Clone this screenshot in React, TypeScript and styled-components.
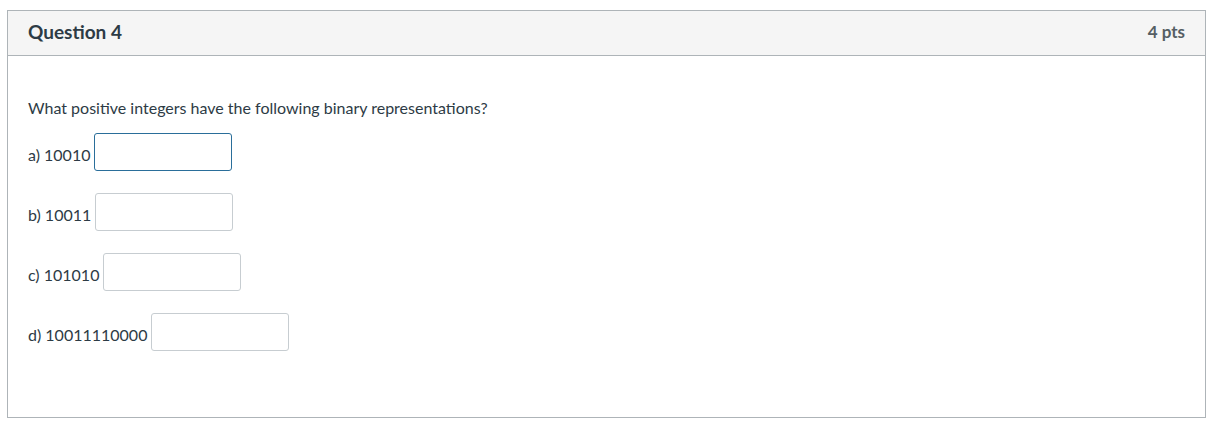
import styled, { createGlobalStyle } from "styled-components";

const Global = createGlobalStyle`
  body {
    margin: 0;
    background: #ffffff;
    font-family: Lato, "Open Sans", sans-serif;
    color: #2d3b45;
  }
`;

const Page = styled.div`
  padding: 10px 13px 9px 7px;
`;

const Card = styled.div`
  border: 1px solid #aeb4b8;
`;

const Header = styled.div`
  display: flex;
  align-items: center;
  justify-content: space-between;
  height: 45px;
  padding: 0 20px 4px;
  box-sizing: border-box;
  background: #f5f5f5;
  border-bottom: 1px solid #aeb4b8;
`;

const Title = styled.h2`
  margin: 0;
  font-size: 19px;
  font-weight: 700;
  color: #2d3b45;
`;

const Points = styled.span`
  font-size: 17px;
  font-weight: 700;
  color: #555e64;
`;

const Body = styled.div`
  display: flex;
  flex-direction: column;
  gap: 22px;
  padding: 42px 20px 66px;
`;

const Prompt = styled.p`
  margin: 0 0 -7px;
  font-size: 16px;
  line-height: 20px;
`;

const Row = styled.label`
  display: flex;
  align-items: center;
  gap: 4px;
  font-size: 16px;
`;

const Text = styled.span`
  padding-top: 5px;
`;

const Answer = styled.input<{ $focused?: boolean }>`
  box-sizing: border-box;
  width: 138px;
  height: 38px;
  padding: 0 8px;
  border: 1px solid ${(p) => (p.$focused ? "#2a6e9a" : "#c7cdd1")};
  border-radius: 3px;
  background: #ffffff;
  font: inherit;
  outline: none;
`;

const parts = [
  { label: "a) 10010", focused: true },
  { label: "b) 10011" },
  { label: "c) 101010" },
  { label: "d) 10011110000" },
];

export default function App() {
  return (
    <>
      <Global />
      <Page>
        <Card>
          <Header>
            <Title>Question 4</Title>
            <Points>4 pts</Points>
          </Header>
          <Body>
            <Prompt>What positive integers have the following binary representations?</Prompt>
            {parts.map((part) => (
              <Row key={part.label}>
                <Text>{part.label}</Text>
                <Answer type="text" $focused={part.focused} />
              </Row>
            ))}
          </Body>
        </Card>
      </Page>
    </>
  );
}
